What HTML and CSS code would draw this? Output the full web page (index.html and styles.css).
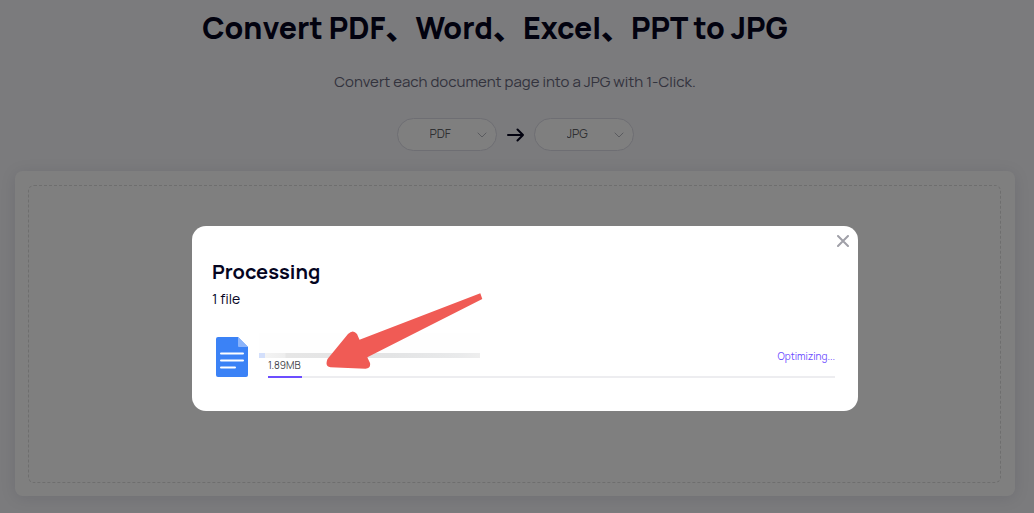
FILE: index.html
```html
<!DOCTYPE html>
<html lang="en">
<head>
    <meta charset="UTF-8">
    <meta name="viewport" content="width=device-width, initial-scale=1">
    <title>Convert to JPG</title>
    <link rel="stylesheet" href="styles.css">
</head>
<body>

<main class="page">
    <h1 class="title">Convert PDF、Word、Excel、PPT to JPG</h1>
    <p class="subtitle">Convert each document page into a JPG with 1-Click.</p>

    <div class="formats">
        <div class="picker">
            <select class="picker-select" aria-label="Convert from">
                <option>PDF</option>
            </select>
            <svg class="picker-chevron" width="10" height="6" viewBox="0 0 10 6" aria-hidden="true">
                <path d="M0.7 0.7L5 5L9.3 0.7"/>
            </svg>
        </div>
        <svg class="formats-arrow" width="17" height="14" viewBox="0 0 17 14" aria-hidden="true">
            <path d="M1 7H16M10.5 1.5L16 7L10.5 12.5"/>
        </svg>
        <div class="picker">
            <select class="picker-select" aria-label="Convert to">
                <option>JPG</option>
            </select>
            <svg class="picker-chevron" width="10" height="6" viewBox="0 0 10 6" aria-hidden="true">
                <path d="M0.7 0.7L5 5L9.3 0.7"/>
            </svg>
        </div>
    </div>

    <section class="upload">
        <div class="dropzone"></div>
    </section>
</main>

<div class="overlay">
    <div class="modal" role="dialog" aria-labelledby="modal-title">
        <button class="close" aria-label="Close">
            <svg width="12" height="12" viewBox="0 0 12 12" aria-hidden="true">
                <path d="M1 1L11 11M11 1L1 11"/>
            </svg>
        </button>

        <h2 class="modal-title" id="modal-title">Processing</h2>
        <p class="count">1 file</p>

        <div class="file">
            <svg class="file-icon" width="32" height="40" viewBox="0 0 32 40" aria-hidden="true">
                <path fill="#3b82f6" d="M2 0H22L32 10V38A2 2 0 0 1 30 40H2A2 2 0 0 1 0 38V2A2 2 0 0 1 2 0Z"/>
                <path fill="#8cb4fa" d="M22 0L32 10H23A1 1 0 0 1 22 9Z"/>
                <path stroke="#fff" stroke-width="2" stroke-linecap="round" d="M5 16.5H27M5 23.5H27M5 30.5H19"/>
            </svg>
            <div class="file-info">
                <div class="file-name"></div>
                <div class="file-row">
                    <label class="file-size" for="progress">1.89MB</label>
                    <span class="file-status">Optimizing...</span>
                </div>
                <progress class="file-progress" id="progress" value="6" max="100"></progress>
            </div>
        </div>

        <svg class="pointer" width="158" height="80" viewBox="0 0 158 80" aria-hidden="true">
            <path d="M154.3 1.2L33.5 47.7L31 42Q27 37 22 42L1.5 67Q-1.5 74.5 4.5 75.3L39.5 76.8Q45 76.5 44 71L41.3 65.2L156.3 7Z"/>
        </svg>
    </div>
</div>

</body>
</html>
```
FILE: styles.css
```css
* {
    box-sizing: border-box;
}

body {
    margin: 0;
    font-family: Manrope, Inter, "Noto Sans CJK SC", sans-serif;
    color: #05051f;
    background-color: #f6f6fa;
}

h1, h2, p {
    margin: 0;
}

.page {
    display: flex;
    flex-direction: column;
    align-items: center;
    min-height: 100vh;
    padding: 8px 19px 17px 15px;
}

.title {
    padding-right: 40px;
    font-size: 30px;
    line-height: 40px;
    font-weight: 800;
    text-align: center;
}

.subtitle {
    margin-top: 22px;
    font-size: 15px;
    line-height: 24px;
    font-weight: 400;
    color: #66667a;
}

.formats {
    display: flex;
    align-items: center;
    gap: 10px;
    margin-top: 24px;
}

.formats-arrow {
    fill: none;
    stroke: #05051f;
    stroke-width: 2;
    stroke-linecap: round;
    stroke-linejoin: round;
}

.picker {
    display: grid;
    align-items: center;
    width: 100px;
}

.picker-select {
    grid-area: 1 / 1;
    height: 33px;
    padding: 0 32px 2px;
    border: 1px solid #dcdce6;
    border-radius: 17px;
    appearance: none;
    background-color: #fff;
    font-family: inherit;
    font-size: 12px;
    color: #606266;
}

.picker-chevron {
    grid-area: 1 / 1;
    justify-self: end;
    margin-right: 10px;
    fill: none;
    stroke: #b4b6be;
    pointer-events: none;
}

.upload {
    display: flex;
    flex: 1;
    width: 100%;
    margin-top: 20px;
    padding: 14px 14px 13px 13px;
    border-radius: 8px;
    background-color: #fff;
    box-shadow: 0 2px 16px rgba(20, 20, 60, 0.1);
}

.dropzone {
    flex: 1;
    border: 1px dashed #dcdcdc;
    border-radius: 6px;
}

.overlay {
    position: fixed;
    inset: 0;
    display: flex;
    align-items: center;
    justify-content: center;
    padding: 124px 0 0 16px;
    background-color: rgba(0, 0, 0, 0.5);
}

.modal {
    position: relative;
    width: 666px;
    max-width: 100%;
    padding: 32px 23px 33px 20px;
    border-radius: 14px;
    background-color: #fff;
}

.close {
    position: absolute;
    top: 8px;
    right: 8px;
    display: flex;
    padding: 1px;
    border: none;
    background: none;
    cursor: pointer;
}

.close svg {
    stroke: #a0a0a8;
    stroke-width: 2;
    stroke-linecap: round;
}

.modal-title {
    font-size: 20px;
    line-height: 28px;
    font-weight: 700;
}

.count {
    margin-top: 3px;
    font-size: 14px;
    line-height: 20px;
}

.file {
    display: flex;
    gap: 20px;
    margin-top: 24px;
    padding-left: 4px;
}

.file-icon {
    flex: none;
    margin-top: 4px;
    fill: none;
}

.file-info {
    flex: 1;
}

/* file name is masked */
.file-name {
    width: 221px;
    height: 25px;
    margin-left: -9px;
    background: linear-gradient(to right, #d3dffb 6px, #f3f3f3 6px, #eee 26px, #e6e6e6 27px, #e3e4e5 60%, #e9eaeb 90%, #eee) bottom / 100% 5px no-repeat #fefefe;
}

.file-row {
    display: flex;
    align-items: flex-start;
    justify-content: space-between;
    height: 18px;
    font-size: 10px;
    line-height: 14px;
}

.file-size {
    color: #44464c;
}

.file-status {
    margin-top: -9px;
    color: #6c4dff;
}

.file-progress {
    display: block;
    width: 100%;
    height: 2px;
    border: none;
    appearance: none;
    background-color: #ededf0;
}

.file-progress::-webkit-progress-bar {
    background-color: #ededf0;
}

.file-progress::-webkit-progress-value {
    background-color: #6c4dff;
}

.pointer {
    position: absolute;
    top: 66px;
    left: 134px;
    fill: #f05b55;
}
```
